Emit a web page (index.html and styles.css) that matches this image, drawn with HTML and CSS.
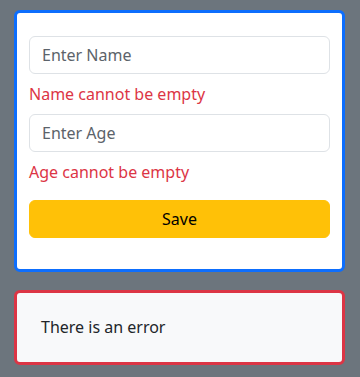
FILE: index.html
```html
<!DOCTYPE html>
<html>
  <head>
    <meta charset="UTF-8" />
    <meta name="viewport" content="width=device-width, initial-scale=1.0" />
    <title>Form</title>
    <link rel="stylesheet" href="styles.css">
  </head>
  <body>
    <form class="card card-primary">
      <input class="field" type="text" placeholder="Enter Name" />
      <div class="error-text">Name cannot be empty</div>
      <input class="field" type="text" placeholder="Enter Age" />
      <div class="error-text">Age cannot be empty</div>
      <button class="btn-save" type="button">Save</button>
    </form>

    <div class="card card-danger">
      There is an error
    </div>
  </body>
</html>
```

FILE: styles.css
```css
html {
  background: #6c757d;
}
body {
  box-sizing: border-box;
  margin: 0;
  padding: 10px 15px 10px 14px;
  font-family: "Noto Sans", "Open Sans", sans-serif;
  font-size: 16px;
  line-height: 24px;
  color: #212529;
}

/* カード */
.card {
  display: flex;
  flex-direction: column;
  border: 3px solid;
  border-radius: 6px;
}
.card-primary {
  margin: 0 0 18px;
  padding: 23px 12px 31px;
  border-color: #0d6efd;
  background: white;
}
.card-danger {
  padding: 22px 24px 23px;
  border-color: #dc3545;
  background: #f8f9fa;
}

/* 入力欄 */
.field {
  box-sizing: border-box;
  width: 100%;
  height: 38px;
  padding: 6px 12px;
  border: 1px solid #dee2e6;
  border-radius: 6px;
  font: inherit;
  color: #212529;
  background: white;
}
.field::placeholder {
  color: #5c636a;
}
.error-text {
  margin: 8px 0;
  color: #dc3545;
}

.btn-save {
  height: 38px;
  margin-top: 8px;
  padding: 6px 12px;
  border: 1px solid #ffc107;
  border-radius: 6px;
  background: #ffc107;
  font: inherit;
  color: #000;
}
```
